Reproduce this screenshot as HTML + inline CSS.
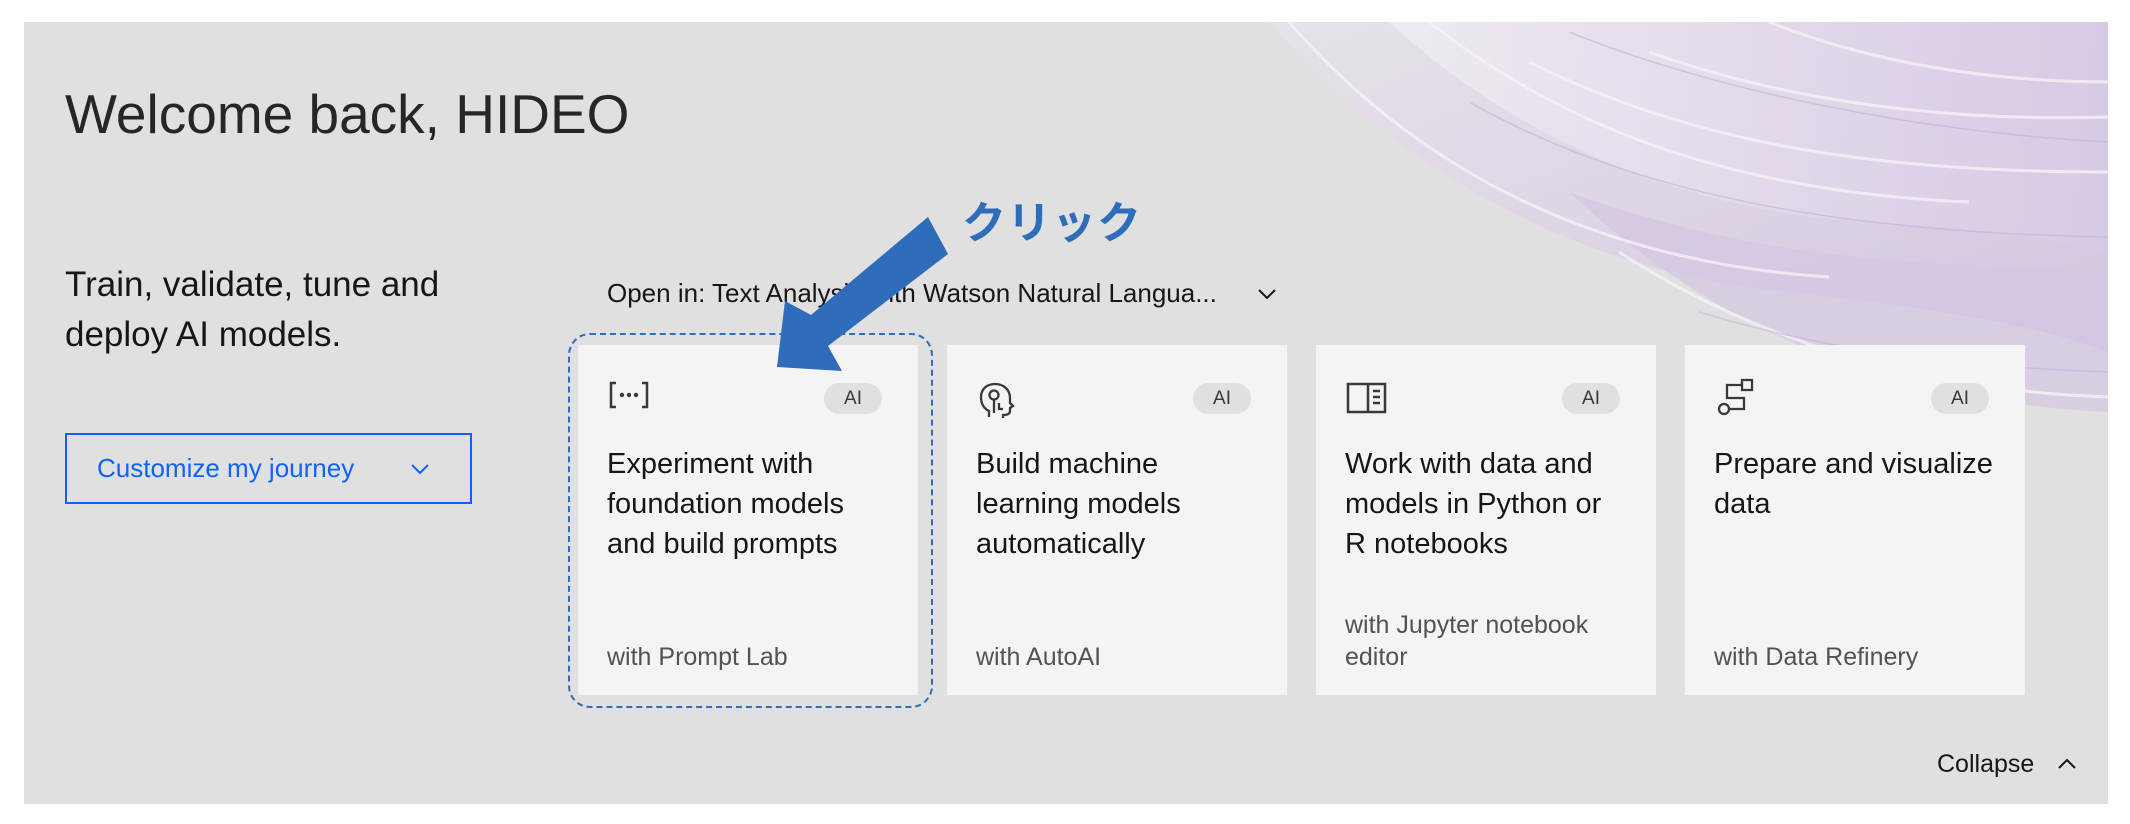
<!DOCTYPE html>
<html><head><meta charset="utf-8"><style>
*{margin:0;padding:0;box-sizing:border-box}
body{width:2130px;height:824px;background:#fff;position:relative;overflow:hidden;font-family:"Liberation Sans","Noto Sans CJK JP",sans-serif;color:#161616}
#panel{position:absolute;left:24px;top:22px;width:2084px;height:782px;background:#e0e0e0;overflow:hidden}
.abs{position:absolute}
.card{position:absolute;top:345px;width:340px;height:350px;background:#f4f4f4}
.card .t{position:absolute;left:29px;top:99px;font-size:29px;line-height:40px;color:#161616;width:310px;white-space:nowrap}
.card .s{position:absolute;left:29px;bottom:22px;font-size:25px;line-height:32px;color:#525252}
.card .ai{position:absolute;left:246px;top:38px;width:58px;height:31px;border-radius:16px;background:#e0e0e0;font-size:19px;line-height:31px;text-align:center;color:#393939}
.card svg.ic{position:absolute;left:30px;top:36px}
</style></head><body>
<div id="panel">
<svg class="abs" style="left:1245px;top:0" width="839" height="420" viewBox="0 0 839 420">
<defs>
<linearGradient id="g1" x1="0" y1="0" x2="1" y2="1"><stop offset="0" stop-color="#e8e2ea"/><stop offset="0.5" stop-color="#ddd2e6"/><stop offset="1" stop-color="#cdbddf"/></linearGradient>
<linearGradient id="g2" x1="0" y1="0" x2="1" y2="0"><stop offset="0" stop-color="#f0ebf1"/><stop offset="1" stop-color="#d6c9e5"/></linearGradient>
</defs>
<path d="M0 0 C120 140 300 250 520 270 C650 285 760 300 839 330 L839 0 Z" fill="url(#g1)" opacity="0.8"/>
<path d="M120 0 C250 120 420 190 600 200 C700 205 780 215 839 230 L839 0 Z" fill="url(#g2)" opacity="0.9"/>
<path d="M300 170 C470 330 650 380 839 390 L839 250 C700 240 520 250 300 170 Z" fill="#d3c6e2" opacity="0.7"/>
<g fill="none" stroke="#f6f2f7" stroke-width="3" opacity="0.8">
<path d="M20 0 C150 150 330 240 560 255"/><path d="M160 0 C300 110 470 170 700 180"/><path d="M260 40 C420 120 600 150 839 150"/><path d="M380 30 C520 80 680 100 839 95"/><path d="M350 230 C520 340 700 370 839 375"/><path d="M500 0 C600 40 720 60 839 60"/>
</g>
<g fill="none" stroke="#c2b1d8" stroke-width="1.5" opacity="0.6">
<path d="M200 80 C360 170 560 210 839 215"/><path d="M430 290 C560 330 700 345 839 350"/><path d="M300 10 C450 70 650 110 839 120"/>
</g>
</svg>
<div class="abs" style="left:41px;top:60px;font-size:55px;color:#262626">Welcome back, HIDEO</div>
<div class="abs" style="left:41px;top:238px;font-size:35px;line-height:50px;color:#161616">Train, validate, tune and<br>deploy AI models.</div>
<div class="abs" style="left:41px;top:411px;width:407px;height:71px;border:2px solid #0f62fe;color:#0f62fe;font-size:26px;line-height:67px;padding-left:30px">Customize my journey
<svg class="abs" style="left:343px;top:27px" width="20" height="14" viewBox="0 0 20 14"><path d="M2 3 L10 11 L18 3" fill="none" stroke="#0f62fe" stroke-width="2"/></svg></div>
<div class="abs" style="left:583px;top:256px;font-size:26px;color:#161616">Open in: Text Analysis with Watson Natural Langua...</div>
<svg class="abs" style="left:1233px;top:265px" width="20" height="14" viewBox="0 0 20 14"><path d="M2 3 L10 11 L18 3" fill="none" stroke="#161616" stroke-width="2"/></svg>
<div class="abs" style="left:1913px;top:728px;font-size:25px;color:#161616">Collapse</div>
<svg class="abs" style="left:2033px;top:735px" width="20" height="14" viewBox="0 0 20 14"><path d="M2 11 L10 3 L18 11" fill="none" stroke="#161616" stroke-width="2"/></svg>
</div>

<div class="card" style="left:578px">
<svg class="ic" width="42" height="28" viewBox="0 0 42 28"><path d="M8 2 H3 V26 H8 M34 2 H39 V26 H34" fill="none" stroke="#393939" stroke-width="2.5"/><circle cx="14" cy="14" r="2.2" fill="#393939"/><circle cx="21" cy="14" r="2.2" fill="#393939"/><circle cx="28" cy="14" r="2.2" fill="#393939"/></svg>
<div class="ai">AI</div>
<div class="t">Experiment with<br>foundation models<br>and build prompts</div>
<div class="s">with Prompt Lab</div></div>

<div class="card" style="left:947px">
<svg class="ic" width="40" height="40" viewBox="0 0 40 40"><path d="M12 36 V30 C6 27 4 22 4 16 C4 8 10 3 18 3 C27 3 33 9 33 17 V22 L36 25 L33 27 V30 C33 33 30 34 26 34 V37" fill="none" stroke="#393939" stroke-width="2.3"/><circle cx="17" cy="14" r="4.5" fill="none" stroke="#393939" stroke-width="2.3"/><path d="M17 18.5 V32 M22 22 V28 H26" fill="none" stroke="#393939" stroke-width="2.3"/></svg>
<div class="ai">AI</div>
<div class="t">Build machine<br>learning models<br>automatically</div>
<div class="s">with AutoAI</div></div>

<div class="card" style="left:1316px">
<svg class="ic" width="42" height="34" viewBox="0 0 42 34"><rect x="2" y="3" width="37" height="28" fill="none" stroke="#393939" stroke-width="2.5"/><path d="M22 3 V31 M27 10 H34 M27 16 H34 M27 22 H34" stroke="#393939" stroke-width="2.5"/></svg>
<div class="ai">AI</div>
<div class="t">Work with data and<br>models in Python or<br>R notebooks</div>
<div class="s">with Jupyter notebook<br>editor</div></div>

<div class="card" style="left:1685px">
<svg class="ic" style="top:32px" width="42" height="40" viewBox="0 0 42 40"><rect x="27" y="3" width="10" height="10" fill="none" stroke="#393939" stroke-width="2.3"/><path d="M27 8 H12 V21 H29 V32 H15" fill="none" stroke="#393939" stroke-width="2.3"/><circle cx="9" cy="32" r="5" fill="none" stroke="#393939" stroke-width="2.3"/></svg>
<div class="ai">AI</div>
<div class="t">Prepare and visualize<br>data</div>
<div class="s">with Data Refinery</div></div>

<div class="abs" style="left:568px;top:333px;width:365px;height:375px;border:2.5px dashed #2f6dba;border-radius:22px"></div>
<svg class="abs" style="left:0;top:0" width="2130" height="824"><polygon points="928,217 948,254 828,346 842,371 777,367 785,301 811,315" fill="#2f6dba"/></svg>
<div class="abs" style="left:962px;top:187px;font-size:44px;font-weight:bold;color:#2f6dba;font-family:'Noto Sans CJK JP',sans-serif;letter-spacing:1px">クリック</div>
</body></html>
